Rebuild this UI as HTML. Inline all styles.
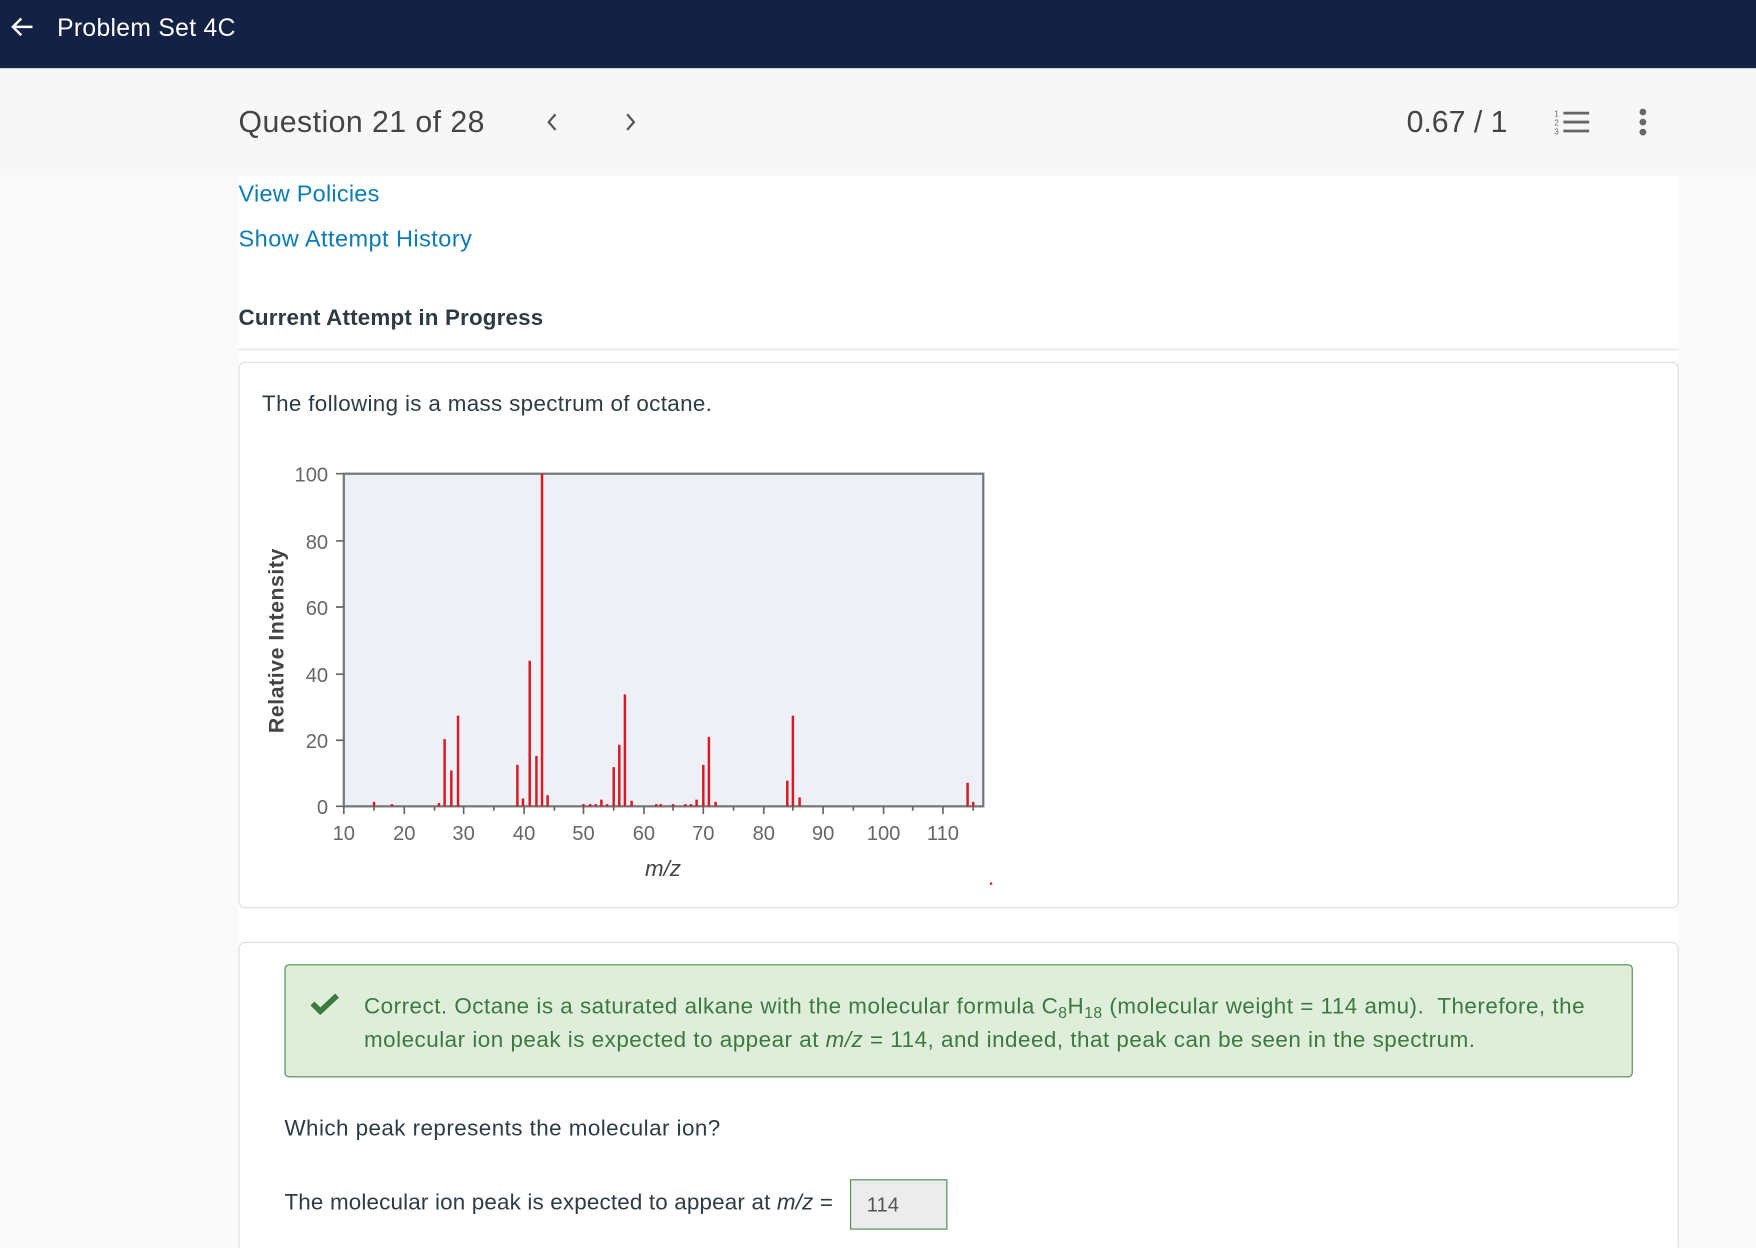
<!DOCTYPE html>
<html><head><meta charset="utf-8"><style>
*{margin:0;padding:0;box-sizing:border-box}
html,body{width:1756px;height:1248px;overflow:hidden;background:#f9f9f9;font-family:"Liberation Sans",sans-serif}
#w{position:absolute;left:0;top:0;width:1568px;height:1114px;overflow:hidden;transform:scale(1.1199);transform-origin:0 0}
.hdr{position:absolute;left:0;top:0;width:1568px;height:61px;background:#132244;color:#fff}
.hdr .t{position:absolute;left:51px;top:12px;font-size:22px;letter-spacing:0.3px}
.qbar{position:absolute;left:0;top:61px;width:1568px;height:96px;background:#f7f7f7}
.abs{position:absolute;white-space:nowrap}
.panel{position:absolute;left:213px;top:157px;width:1286px;height:1000px;background:#fff}
a{color:#0c7db3;text-decoration:none}
.card{position:absolute;border:1px solid #dcdcdc;border-radius:6px;background:#fff}
.fb{position:absolute;left:254px;top:861px;width:1204px;height:101px;background:#dfeedb;border:1px solid #4f8a4f;border-radius:4px;color:#3b7a3e;font-size:20px;letter-spacing:0.45px;line-height:30px}
sub{font-size:14px;line-height:0;vertical-align:-4px}
</style></head><body><div id="w">
<div class="hdr">
<svg style="position:absolute;left:8px;top:12px" width="24" height="24" viewBox="0 0 24 24"><path d="M21 12H4M11 4.5L3.5 12 11 19.5" stroke="#fff" stroke-width="2.2" fill="none"/></svg>
<div class="t">Problem Set 4C</div></div>
<div class="qbar">
<div class="abs" style="left:213px;top:33px;font-size:27px;color:#444;letter-spacing:0.4px">Question 21 of 28</div>
<svg class="abs" style="left:485px;top:38px" width="16" height="20"><path d="M11 3L5 10l6 7" stroke="#555" stroke-width="2" fill="none"/></svg>
<svg class="abs" style="left:555px;top:38px" width="16" height="20"><path d="M5 3l6 7-6 7" stroke="#555" stroke-width="2" fill="none"/></svg>
<div class="abs" style="left:1256px;top:33px;font-size:27px;color:#444">0.67 / 1</div>
<svg class="abs" style="left:1387px;top:35px" width="34" height="26"><text x="1" y="8" font-size="7" fill="#666" font-family="Liberation Sans">1</text><text x="1" y="16" font-size="7" fill="#666" font-family="Liberation Sans">2</text><text x="1" y="24" font-size="7" fill="#666" font-family="Liberation Sans">3</text><path d="M9 5h23M9 13h23M9 21h23" stroke="#666" stroke-width="2.5"/></svg>
<svg class="abs" style="left:1460px;top:34px" width="14" height="28"><circle cx="7" cy="5" r="3" fill="#666"/><circle cx="7" cy="14" r="3" fill="#666"/><circle cx="7" cy="23" r="3" fill="#666"/></svg>
</div>
<div class="panel"></div>
<a class="abs" style="left:213px;top:162px;font-size:21px;letter-spacing:0.2px">View Policies</a>
<a class="abs" style="left:213px;top:202px;font-size:21px;letter-spacing:0.4px">Show Attempt History</a>
<div class="abs" style="left:213px;top:273px;font-size:20px;font-weight:bold;color:#2d3b45;letter-spacing:0.15px">Current Attempt in Progress</div>
<div class="abs" style="left:213px;top:311px;width:1286px;height:2px;background:#ececec"></div>
<div class="card" style="left:213px;top:323px;width:1286px;height:488px"></div>
<div class="abs" style="left:234px;top:350px;font-size:20px;color:#2d3b45;letter-spacing:0.3px">The following is a mass spectrum of octane.</div>
<svg class="abs" style="left:225px;top:405px" width="680" height="400" viewBox="225 405 680 400" font-family="Liberation Sans" fill="#666">
<rect x="307" y="423" width="571" height="297" fill="#eef0f7" stroke="#777" stroke-width="2"/>
<g stroke="#666" stroke-width="1.5">
<path d="M300 423h7M300 483h7M300 542h7M300 602h7M300 661h7M300 720h7"/>
<path d="M307 720v7M361 720v7M414 720v7M468 720v7M521 720v7M575 720v7M628 720v7M682 720v7M735 720v7M789 720v7M842 720v7"/>
<path d="M334 720v4M388 720v4M441 720v4M495 720v4M548 720v4M601 720v4M655 720v4M708 720v4M762 720v4M815 720v4M869 720v4"/>
</g>
<g font-size="18" text-anchor="end"><text x="293" y="430">100</text><text x="293" y="490">80</text><text x="293" y="549">60</text><text x="293" y="609">40</text><text x="293" y="668">20</text><text x="293" y="727">0</text></g>
<g font-size="18" text-anchor="middle"><text x="307" y="750">10</text><text x="361" y="750">20</text><text x="414" y="750">30</text><text x="468" y="750">40</text><text x="521" y="750">50</text><text x="575" y="750">60</text><text x="628" y="750">70</text><text x="682" y="750">80</text><text x="735" y="750">90</text><text x="789" y="750">100</text><text x="842" y="750">110</text></g>
<text x="592" y="782" font-size="20" font-style="italic" text-anchor="middle" fill="#444">m/z</text>
<text transform="translate(253 572) rotate(-90)" font-size="19" font-weight="bold" text-anchor="middle" fill="#444" letter-spacing="0.5">Relative Intensity</text>
<g stroke="#d71920" stroke-width="2.2">
<path d="M334 720V716M350 720V718M392 720V717M397 720V660M403 720V688M409 720V639M462 720V683M467 720V713M473 720V590M479 720V675M484 720V423M489 720V710M521 720V718M527 720V718M532 720V718M537 720V714M542 720V718M548 720V685M553 720V665M558 720V620M564 720V715M586 720V718M590 720V718M601 720V718M612 720V718M617 720V718M622 720V714M628 720V683M633 720V658M639 720V716M703 720V697M708 720V639M714 720V712M864 720V699M869 720V716"/>
</g>
<rect x="884" y="788" width="2" height="2" fill="#d71920"/>
</svg>
<div class="card" style="left:213px;top:841px;width:1286px;height:320px"></div>
<div class="fb">
<svg style="position:absolute;left:22px;top:24px" width="26" height="20"><path d="M2 10l7 7L24 3" stroke="#3b7a3e" stroke-width="5" fill="none"/></svg>
<div style="position:absolute;left:70px;top:22px;white-space:nowrap">Correct. Octane is a saturated alkane with the molecular formula C<sub>8</sub>H<sub>18</sub> (molecular weight = 114 amu).&nbsp; Therefore, the<br>molecular ion peak is expected to appear at <i>m/z</i> = 114, and indeed, that peak can be seen in the spectrum.</div>
</div>
<div class="abs" style="left:254px;top:997px;font-size:20px;color:#2d3b45;letter-spacing:0.4px">Which peak represents the molecular ion?</div>
<div class="abs" style="left:254px;top:1063px;font-size:20px;color:#2d3b45;letter-spacing:0.15px">The molecular ion peak is expected to appear at <i>m/z</i> =</div>
<div class="abs" style="left:759px;top:1053px;width:87px;height:45px;background:#ececec;border:1px solid #4f8a4f;font-size:18px;color:#555;padding:12px 0 0 14px">114</div>
</div></body></html>
